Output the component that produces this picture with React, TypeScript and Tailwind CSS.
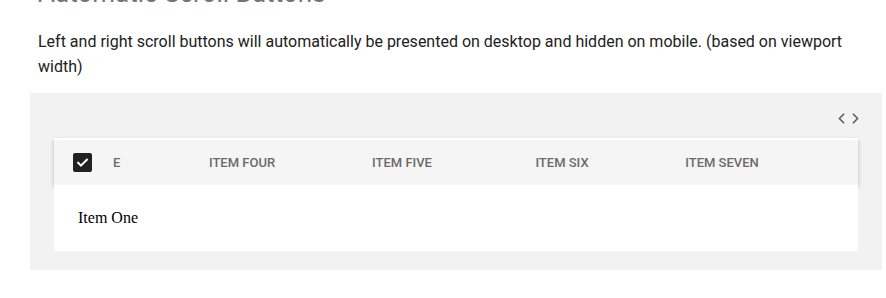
import { ChevronLeft, ChevronRight } from "lucide-react"

const tabs = ["Item Four", "Item Five", "Item Six", "Item Seven"]

const CheckBox = () => (
    <span className="flex h-[19px] w-[19px] items-center justify-center rounded-[2px] bg-[#212121]">
        <svg viewBox="0 0 24 24" className="h-[15px] w-[15px]" fill="none" stroke="white" strokeWidth="3.2" strokeLinecap="square">
            <path d="M5 12.5l4.5 4.5L19 7.5" />
        </svg>
    </span>
)

export default function App() {
    return (
        <div className="min-h-[298px] bg-white pl-[30px] pr-1 font-['Roboto',sans-serif] overflow-hidden">
            <h2 className="mt-[-22px] px-2 text-[26px] leading-[31px] text-[#757575]">
                Automatic Scroll Buttons
            </h2>

            <p className="mt-5 px-2 text-base leading-[25px] text-[#212121]">
                Left and right scroll buttons will automatically be presented on desktop and hidden on mobile. (based on viewport width)
            </p>

            <div className="mt-[14px] bg-[#f2f2f2] px-6 pt-4 pb-[19px]">
                <div className="mr-[-6px] flex h-[18px] items-center justify-end text-[#5f5f5f]">
                    <ChevronLeft size={17} strokeWidth={2.4} className="-mr-[3px]" />
                    <ChevronRight size={17} strokeWidth={2.4} />
                </div>

                <div className="mt-[11px] flex h-[47px] items-center overflow-hidden border-t-2 border-white bg-[#f5f5f5] shadow-[0_2px_4px_rgba(0,0,0,0.25)]">
                    <div className="flex w-[56px] justify-end pr-[18px]">
                        <CheckBox />
                    </div>
                    <div className="w-[52px] pl-[3px] text-[13px] font-medium uppercase text-[#6b6b6b]">E</div>
                    {tabs.map(tab => (
                        <div key={tab} className="w-[160px] shrink-0 text-center text-[13px] font-medium uppercase text-[#6b6b6b]">
                            {tab}
                        </div>
                    ))}
                </div>

                <div className="flex h-[66px] items-center bg-white pl-6 font-['Liberation_Serif',serif] text-base text-black">
                    Item One
                </div>
            </div>
        </div>
    )
}
